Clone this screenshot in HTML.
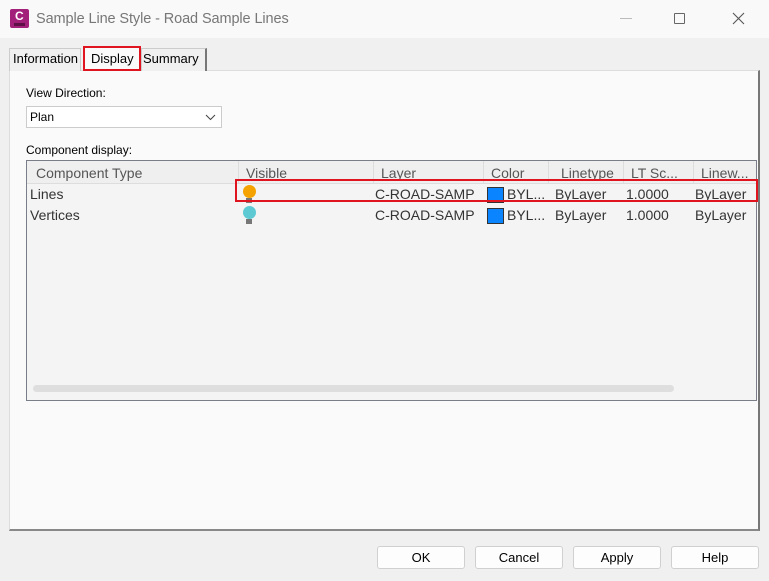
<!DOCTYPE html>
<html><head><style>
*{box-sizing:border-box;margin:0;padding:0}
body{width:769px;height:581px;background:#f0f0f0;font-family:"Liberation Sans",sans-serif;font-size:13px;color:#000;position:relative;overflow:hidden}
.a{position:absolute}
.t{position:absolute;white-space:nowrap}
</style></head><body>
<div class="a" style="left:0;top:0;width:769px;height:38px;background:#f9f9f9"></div>
<div class="a" style="left:10px;top:9px;width:19px;height:19px;background:#a3207a;border-radius:2px"></div>
<div class="t" style="left:15px;top:9px;color:#fff;font-weight:bold;font-size:12px">C</div>
<div class="a" style="left:14px;top:23px;width:11px;height:3px;background:#5c1046"></div>
<div class="t" style="left:36px;top:11px;font-size:14.5px;color:#777;letter-spacing:-0.1px">Sample Line Style - Road Sample Lines</div>
<div class="a" style="left:620px;top:18px;width:12px;height:1px;background:#bbb"></div>
<div class="a" style="left:674px;top:13px;width:11px;height:11px;border:1px solid #666;border-radius:1px"></div>
<svg class="a" style="left:732px;top:12px" width="13" height="13"><path d="M1 1L12 12M12 1L1 12" stroke="#555" stroke-width="1.1"/></svg>

<div class="a" style="left:9px;top:70px;width:751px;height:461px;background:#fafafa;border-right:2px solid #777;border-bottom:2px solid #888;border-left:1px solid #ddd;border-top:1px solid #ddd"></div>
<div class="a" style="left:9px;top:48px;width:72px;height:23px;background:#f0f0f0;border:1px solid #ccc;border-bottom:none"></div>
<div class="t" style="left:13px;top:51px">Information</div>
<div class="a" style="left:83px;top:46px;width:58px;height:25px;background:#fafafa;border:2px solid #e0141e"></div>
<div class="t" style="left:91px;top:51px">Display</div>
<div class="a" style="left:141px;top:48px;width:66px;height:23px;background:#f0f0f0;border:1px solid #ccc;border-right:2px solid #777;border-bottom:none"></div>
<div class="t" style="left:143px;top:51px">Summary</div>

<div class="t" style="left:26px;top:86px;font-size:12px">View Direction:</div>
<div class="a" style="left:26px;top:106px;width:196px;height:22px;background:#fff;border:1px solid #ccc"></div>
<div class="t" style="left:30px;top:110px;font-size:12px">Plan</div>
<svg class="a" style="left:205px;top:113px" width="11" height="8"><path d="M1 2L5.5 6.5L10 2" stroke="#444" fill="none"/></svg>
<div class="t" style="left:26px;top:143px;font-size:12px">Component display:</div>

<div class="a" style="left:26px;top:160px;width:731px;height:241px;background:#f4f4f4;border:1px solid #7a7e88"></div>
<div class="a" style="left:27px;top:161px;width:729px;height:23px;background:#efefef;border-bottom:1px solid #ddd"></div>
<div class="a" style="left:238px;top:161px;width:1px;height:23px;background:#ddd"></div>
<div class="a" style="left:373px;top:161px;width:1px;height:23px;background:#ddd"></div>
<div class="a" style="left:483px;top:161px;width:1px;height:23px;background:#ddd"></div>
<div class="a" style="left:548px;top:161px;width:1px;height:23px;background:#ddd"></div>
<div class="a" style="left:623px;top:161px;width:1px;height:23px;background:#ddd"></div>
<div class="a" style="left:693px;top:161px;width:1px;height:23px;background:#ddd"></div>
<div style="font-size:14px;color:#555">
<div class="t" style="left:36px;top:165px">Component Type</div>
<div class="t" style="left:246px;top:165px">Visible</div>
<div class="t" style="left:381px;top:165px">Layer</div>
<div class="t" style="left:491px;top:165px">Color</div>
<div class="t" style="left:561px;top:165px">Linetype</div>
<div class="t" style="left:631px;top:165px">LT Sc...</div>
<div class="t" style="left:701px;top:165px">Linew...</div>
</div>
<div style="font-size:14px;color:#333">
<div class="t" style="left:30px;top:186px">Lines</div>
<div class="t" style="left:30px;top:207px">Vertices</div>
<div class="t" style="left:375px;top:186px">C-ROAD-SAMP</div>
<div class="t" style="left:375px;top:207px">C-ROAD-SAMP</div>
<div class="t" style="left:507px;top:186px">BYL...</div>
<div class="t" style="left:507px;top:207px">BYL...</div>
<div class="t" style="left:555px;top:186px">ByLayer</div>
<div class="t" style="left:555px;top:207px">ByLayer</div>
<div class="t" style="left:626px;top:186px">1.0000</div>
<div class="t" style="left:626px;top:207px">1.0000</div>
<div class="t" style="left:695px;top:186px">ByLayer</div>
<div class="t" style="left:695px;top:207px">ByLayer</div>
</div>
<div class="a" style="left:487px;top:187px;width:17px;height:16px;background:#0a84ff;border:1px solid #333"></div>
<div class="a" style="left:487px;top:208px;width:17px;height:16px;background:#0a84ff;border:1px solid #333"></div>
<div class="a" style="left:243px;top:185px;width:13px;height:13px;border-radius:50%;background:#f5a300"></div>
<div class="a" style="left:246px;top:198px;width:6px;height:5px;background:#777"></div>
<div class="a" style="left:243px;top:206px;width:13px;height:13px;border-radius:50%;background:#5cc9d3"></div>
<div class="a" style="left:246px;top:219px;width:6px;height:5px;background:#777"></div>
<div class="a" style="left:235px;top:179px;width:523px;height:23px;border:2px solid #e0141e"></div>
<div class="a" style="left:33px;top:385px;width:641px;height:7px;background:#dedede;border-radius:4px"></div>

<div style="font-size:13px">
<div class="a" style="left:377px;top:546px;width:88px;height:23px;background:#fdfdfd;border:1px solid #d0d0d0;border-radius:3px;text-align:center;line-height:21px">OK</div>
<div class="a" style="left:475px;top:546px;width:88px;height:23px;background:#fdfdfd;border:1px solid #d0d0d0;border-radius:3px;text-align:center;line-height:21px">Cancel</div>
<div class="a" style="left:573px;top:546px;width:88px;height:23px;background:#fdfdfd;border:1px solid #d0d0d0;border-radius:3px;text-align:center;line-height:21px">Apply</div>
<div class="a" style="left:671px;top:546px;width:88px;height:23px;background:#fdfdfd;border:1px solid #d0d0d0;border-radius:3px;text-align:center;line-height:21px">Help</div>
</div>
</body></html>
